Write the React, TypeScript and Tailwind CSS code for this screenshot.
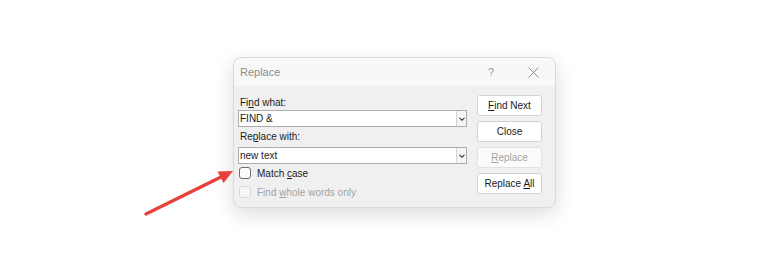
import React from "react";

const font = { fontFamily: '"Segoe UI", "Liberation Sans", Arial, sans-serif' };

function Combo({ value }: { value: string }) {
  return (
    <div className="flex h-[17px] w-[229px] border border-[#adadad] bg-white">
      <div className="flex flex-1 items-center pl-[1px] text-[10px] leading-none text-[#1b1b1b]">
        {value}
      </div>
      <div className="flex w-[10px] items-center justify-center border-l border-[#d4d4d4] bg-[#f4f4f4]">
        <svg width="6" height="4" viewBox="0 0 6 4">
          <path d="M0.5 0.8 L3 3.2 L5.5 0.8" fill="none" stroke="#3c3c3c" strokeWidth="1.1" />
        </svg>
      </div>
    </div>
  );
}

function Check({ label, disabled }: { label: React.ReactNode; disabled?: boolean }) {
  return (
    <div className="flex h-[14px] items-center">
      <div
        className={
          disabled
            ? "ml-[1px] h-[12px] w-[12px] rounded-[3px] border border-[#d9d9d9] bg-[#f6f6f6]"
            : "ml-[1px] h-[12px] w-[12px] rounded-[3px] border border-[#6e6e6e] bg-[#fbfbfb]"
        }
      />
      <span
        className={
          disabled
            ? "ml-[6px] text-[10px] text-[#a3a3a3]"
            : "ml-[6px] text-[10px] text-[#1b1b1b]"
        }
      >
        {label}
      </span>
    </div>
  );
}

function Btn({ children, disabled }: { children: React.ReactNode; disabled?: boolean }) {
  return (
    <div
      className={
        disabled
          ? "flex h-[21px] w-[65px] items-center justify-center rounded-[3px] border border-[#e2e2e2] bg-[#fbfbfb] text-[10px] text-[#a3a3a3]"
          : "flex h-[21px] w-[65px] items-center justify-center rounded-[3px] border border-[#d3d3d3] bg-white text-[10px] text-[#1b1b1b]"
      }
    >
      {children}
    </div>
  );
}

export default function App() {
  return (
    <div className="relative h-[273px] w-[768px] overflow-hidden bg-white" style={font}>
      <div className="pl-[233px] pt-[57px]">
        <div className="w-[323px] overflow-hidden rounded-[8px] border border-[#dadada] bg-[#f0f0f0] shadow-[0_6px_20px_rgba(0,0,0,0.14)]">
          <div className="flex h-[28px] items-center bg-[#f8f8f8] pl-[6px]">
            <span className="text-[11px] text-[#8c8c8c]">Replace</span>
            <span className="ml-auto mr-[34px] text-[11px] text-[#9a9a9a]">?</span>
            <svg className="mr-[16px]" width="11" height="11" viewBox="0 0 11 11">
              <path d="M0.5 0.5 L10.5 10.5 M10.5 0.5 L0.5 10.5" stroke="#8c8c8c" strokeWidth="1" />
            </svg>
          </div>
          <div className="flex pb-[8px] pl-[4px] pt-[9px]">
            <div className="flex w-[229px] flex-col">
              <div className="h-[15px] pl-[2px] text-[10px] leading-[15px] text-[#1b1b1b]">
                Fi<u>n</u>d what:
              </div>
              <Combo value="FIND &" />
              <div className="h-[20px] pl-[2px] text-[10px] leading-[20px] text-[#1b1b1b]">
                Re<u>p</u>lace with:
              </div>
              <Combo value="new text" />
              <div className="mt-[2px] flex flex-col gap-[5px]">
                <Check label={<>Match <u>c</u>ase</>} />
                <Check label={<>Find <u>w</u>hole words only</>} disabled />
              </div>
            </div>
            <div className="ml-[10px] flex flex-col gap-[5px]">
              <Btn><span><u>F</u>ind Next</span></Btn>
              <Btn>Close</Btn>
              <Btn disabled><span><u>R</u>eplace</span></Btn>
              <Btn><span>Replace <u>A</u>ll</span></Btn>
            </div>
          </div>
        </div>
      </div>
      <svg className="absolute left-0 top-0" width="768" height="273" viewBox="0 0 768 273">
        <line x1="146" y1="214" x2="222" y2="176.5" stroke="#e8413b" strokeWidth="3.5" strokeLinecap="round" />
        <polygon points="233,171 223.5,183 217.5,171.5" fill="#e8413b" />
      </svg>
    </div>
  );
}
